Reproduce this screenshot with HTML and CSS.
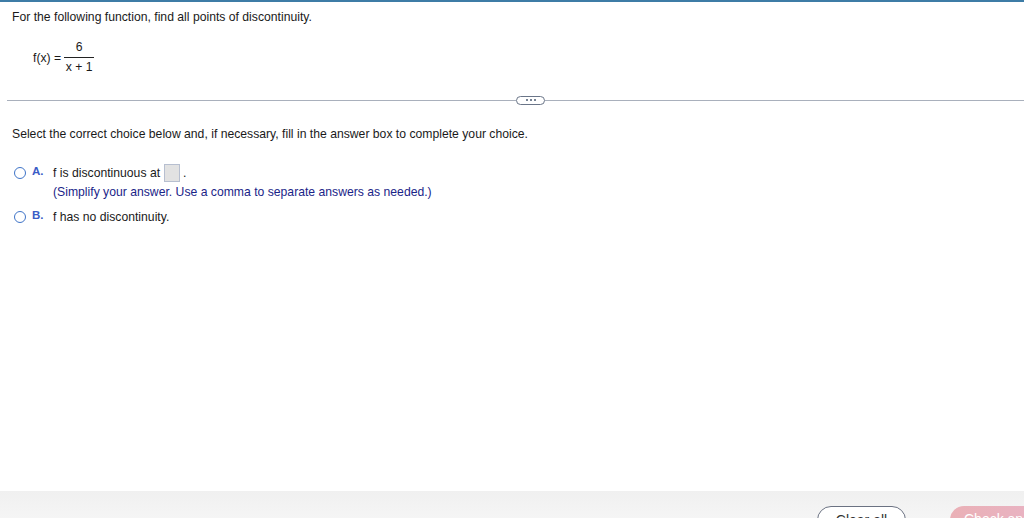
FILE: index.html
```html
<!DOCTYPE html>
<html>
<head>
<meta charset="utf-8">
<link rel="stylesheet" href="styles.css">
</head>
<body>
<div class="page">
  <div class="topbar"></div>
  <div class="question">
    <p class="prompt">For the following function, find all points of discontinuity.</p>
    <div class="formula">
      <span class="fx">f(x) =</span>
      <span class="frac"><span class="num">6</span><span class="den">x + 1</span></span>
    </div>
  </div>
  <div class="divider">
    <span class="rule left"></span>
    <span class="pill"><svg width="14" height="4" viewBox="0 0 14 4"><circle cx="3" cy="2" r="1" fill="#4a5a70"/><circle cx="7" cy="2" r="1" fill="#4a5a70"/><circle cx="11" cy="2" r="1" fill="#4a5a70"/></svg></span>
    <span class="rule right"></span>
  </div>
  <div class="answer">
    <p class="instr">Select the correct choice below and, if necessary, fill in the answer box to complete your choice.</p>
    <div class="choice">
      <span class="radio"></span>
      <span class="letter">A.</span>
      <div class="ctext">
        <div class="line">f is discontinuous at <span class="box"></span>.</div>
        <div class="hint">(Simplify your answer. Use a comma to separate answers as needed.)</div>
      </div>
    </div>
    <div class="choice b">
      <span class="radio"></span>
      <span class="letter">B.</span>
      <div class="ctext"><div class="line">f has no discontinuity.</div></div>
    </div>
  </div>
  <div class="spacer"></div>
  <div class="footer">
    <span class="btn clear">Clear all</span>
    <span class="btn check">Check answer</span>
  </div>
</div>
</body>
</html>
```
FILE: styles.css
```css
html, body { margin: 0; padding: 0; }
body { font-family: "Liberation Sans", Arial, sans-serif; font-size: 12.2px; color: #1a1a1a; background: #fff; }
.page { width: 1024px; height: 518px; display: flex; flex-direction: column; overflow: hidden; }
.topbar { height: 2px; background: #3d7ca6; flex: none; }
.question { padding: 0 12px; }
.prompt { margin: 8px 0 0; line-height: 14px; }
.formula { display: flex; align-items: center; margin: 16px 0 0 21px; }
.fx { margin-right: 3px; line-height: 14px; padding-top: 2px; }
.frac { display: inline-flex; flex-direction: column; align-items: center; }
.num { border-bottom: 1px solid #222; line-height: 14px; padding-bottom: 3px; width: 30px; text-align: center; }
.den { line-height: 14px; padding-top: 2px; }
.divider { display: flex; align-items: center; margin: 21px 0 0 7px; height: 10px; }
.rule { height: 1px; background: #a9b0bc; }
.rule.left { width: 509px; }
.rule.right { flex: 1; }
.pill { width: 27px; height: 7px; border: 1px solid #6a7588; border-radius: 5px; display: flex; align-items: center; justify-content: center; background: #fff; }
.answer { padding: 0 12px; }
.instr { margin: 22px 0 0; line-height: 14px; }
.choice { display: flex; align-items: flex-start; margin-top: 23px; }
.choice.b { margin-top: 9px; }
.radio { width: 10px; height: 10px; border: 1px solid #3f74c8; border-radius: 50%; margin: 3px 0 0 2px; flex: none; }
.letter { color: #3a5cc6; font-weight: bold; width: 21px; margin-left: 6px; line-height: 14px; margin-top: 0; font-size: 11.5px; }
.ctext { line-height: 14px; }
.line { display: flex; align-items: center; height: 18px; }
.choice.b .line { height: 14px; margin-top: 2px; }
.box { display: inline-block; width: 16px; height: 18px; background: #e2e2e2; border: 1px solid #b7bfd0; margin: 0 3px 0 4px; box-sizing: border-box; }
.hint { color: #1a2488; margin-top: 3px; }
.spacer { flex: 1; }
.footer { height: 27px; background: linear-gradient(#f0f0f0, #f5f5f5); display: flex; align-items: flex-start; flex: none; padding-top: 15px; box-sizing: border-box; overflow: hidden; }
.btn { flex: none; font-size: 14px; line-height: 26px; height: 28px; border-radius: 14px; box-sizing: border-box; padding: 0 14px; white-space: nowrap; }
.clear { margin-left: 817px; width: 89px; border: 1.5px solid #6b7282; color: #333; background: #fff; text-align: center; }
.check { margin-left: 44px; width: 120px; background: linear-gradient(90deg, #eab0b6, #e8b4c8); color: #fff; }
```
